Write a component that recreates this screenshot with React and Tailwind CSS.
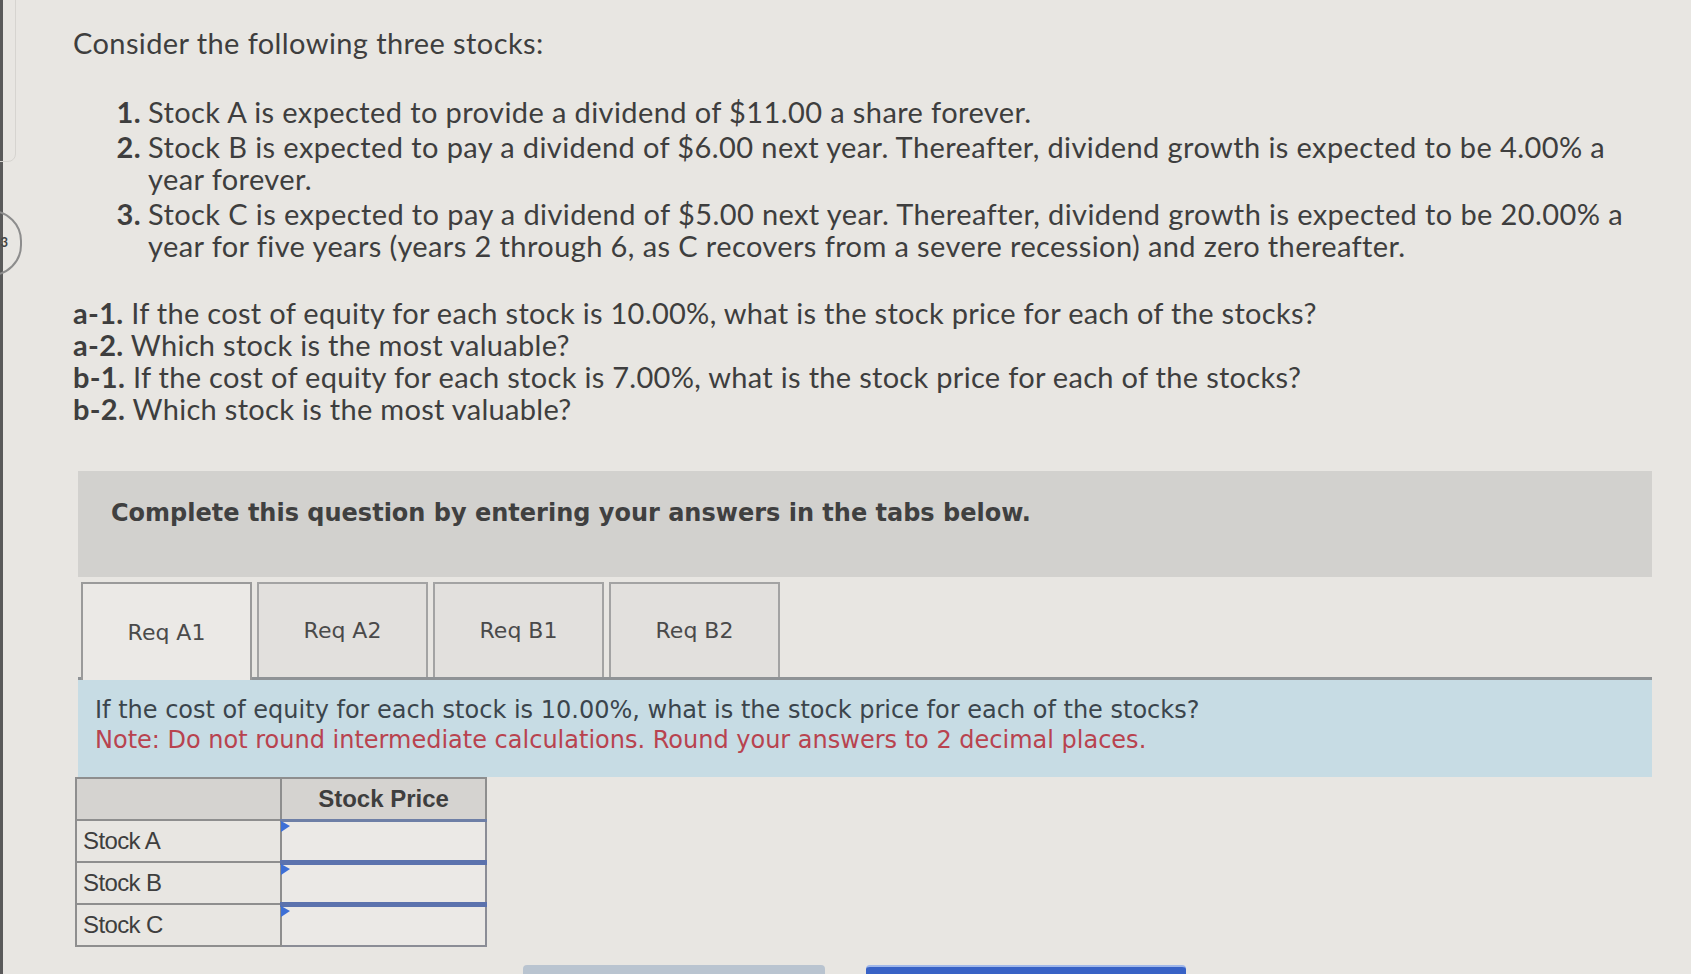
import React from 'react'

const tabs = ['Req A1', 'Req A2', 'Req B1', 'Req B2']
const rows = ['Stock A', 'Stock B', 'Stock C']

function InputCell({ first }) {
    return (
        <td className={`relative p-0 border-2 border-[#8b8d96] ${first ? 'border-t-[3px] border-t-[#6e7fa6]' : 'border-t-[5px] border-t-[#5b72ad]'} bg-[#ebe9e6]`}>
            <svg className="absolute left-[-1px] top-[-1px]" width="9" height="12" viewBox="0 0 9 12">
                <path d="M0 0 L9 5 L0 11 Z" fill="#3d6fd6" />
            </svg>
            <div className="h-[35px]" />
        </td>
    )
}

export default function App() {
    return (
        <div className="relative h-[974px] w-full overflow-hidden bg-[#e8e6e2] font-['Lato',sans-serif] text-[#3e3e3e]">
            {/* page edge bits from the photo */}
            <div className="absolute left-0 top-0 h-full w-[3px] bg-[#5a5a5a]" />
            <div className="absolute left-[-24px] top-[-10px] h-[172px] w-[40px] rounded-lg border border-[#d6d4d0]" />
            <div className="absolute left-[-40px] top-[210px] flex h-[66px] w-[62px] items-center justify-end rounded-full border-2 border-[#8d8d8d] pr-[12px] text-[13px] font-bold text-[#444]">
                3
            </div>

            <div className="pl-[73px] pt-[26px]">
                <p className="text-[29px] leading-[34px] tracking-[0.4px]">Consider the following three stocks:</p>

                <ol className="mt-[36px] flex flex-col gap-[3px] text-[29px] leading-[32px] tracking-[0.4px]">
                    <li className="flex">
                        <span className="w-[75px] shrink-0 text-right pr-[7px] font-bold">1.</span>
                        <span className="whitespace-nowrap">Stock A is expected to provide a dividend of $11.00 a share forever.</span>
                    </li>
                    <li className="flex">
                        <span className="w-[75px] shrink-0 text-right pr-[7px] font-bold">2.</span>
                        <span className="whitespace-nowrap">
                            Stock B is expected to pay a dividend of $6.00 next year. Thereafter, dividend growth is expected to be 4.00% a<br />
                            year forever.
                        </span>
                    </li>
                    <li className="flex">
                        <span className="w-[75px] shrink-0 text-right pr-[7px] font-bold">3.</span>
                        <span className="whitespace-nowrap">
                            Stock C is expected to pay a dividend of $5.00 next year. Thereafter, dividend growth is expected to be 20.00% a<br />
                            year for five years (years 2 through 6, as C recovers from a severe recession) and zero thereafter.
                        </span>
                    </li>
                </ol>

                <div className="mt-[35px] text-[29px] leading-[32px] tracking-[0.3px]">
                    <p><b>a-1.</b> If the cost of equity for each stock is 10.00%, what is the stock price for each of the stocks?</p>
                    <p><b>a-2.</b> Which stock is the most valuable?</p>
                    <p><b>b-1.</b> If the cost of equity for each stock is 7.00%, what is the stock price for each of the stocks?</p>
                    <p><b>b-2.</b> Which stock is the most valuable?</p>
                </div>

                {/* instructions bar */}
                <div className="ml-[5px] mt-[46px] h-[106px] w-[1574px] bg-[#d2d1ce] pl-[33px] pt-[27px] font-['DejaVu_Sans',sans-serif] text-[24px] font-bold leading-[30px] text-[#404040]">
                    Complete this question by entering your answers in the tabs below.
                </div>

                {/* tabs */}
                <div className="ml-[8px] mt-[5px] flex gap-[5px] font-['DejaVu_Sans',sans-serif] text-[22px] text-[#4a4a4a]">
                    {tabs.map((t, i) => (
                        <div
                            key={t}
                            className={`relative flex h-[95px] w-[171px] items-center justify-center border-2 border-b-0 ${i === 0 ? 'z-10 mb-[-3px] h-[98px] border-[#9a9a9a] bg-[#ebe9e6]' : 'border-[#a3a3a3] bg-[#e2e0dd]'}`}
                        >
                            {t}
                        </div>
                    ))}
                </div>

                {/* question panel */}
                <div className="ml-[5px] w-[1574px] border-t-[3px] border-[#8f9396] bg-[#c7dce4] pb-[22px] pl-[17px] pt-[15px] font-['DejaVu_Sans',sans-serif] text-[24px] leading-[30px]">
                    <p className="text-[#3b454c]">If the cost of equity for each stock is 10.00%, what is the stock price for each of the stocks?</p>
                    <p className="text-[#b8434f]">Note: Do not round intermediate calculations. Round your answers to 2 decimal places.</p>
                </div>

                {/* answer table */}
                <table className="ml-[2px] border-collapse font-['Liberation_Sans',sans-serif] text-[24px] text-[#3e3e3e]">
                    <thead>
                        <tr>
                            <th className="h-[42px] w-[205px] border-2 border-[#8e8e8e] bg-[#d5d3d0]" />
                            <th className="h-[42px] w-[205px] border-2 border-[#8e8e8e] bg-[#d5d3d0] text-center font-bold">Stock Price</th>
                        </tr>
                    </thead>
                    <tbody>
                        {rows.map((r, i) => (
                            <tr key={r}>
                                <td className="h-[42px] border-2 border-[#8e8e8e] pl-[6px] tracking-[-0.6px]">{r}</td>
                                <InputCell first={i === 0} />
                            </tr>
                        ))}
                    </tbody>
                </table>

                {/* buttons cut off at the bottom */}
                <div className="mt-[18px] flex gap-[41px] pl-[450px]">
                    <div className="h-[40px] w-[302px] rounded-sm bg-[#b9c4d0]" />
                    <div className="h-[40px] w-[320px] rounded-sm border-t-2 border-[#9fb7ea] bg-[#3862c6]" />
                </div>
            </div>
        </div>
    )
}
